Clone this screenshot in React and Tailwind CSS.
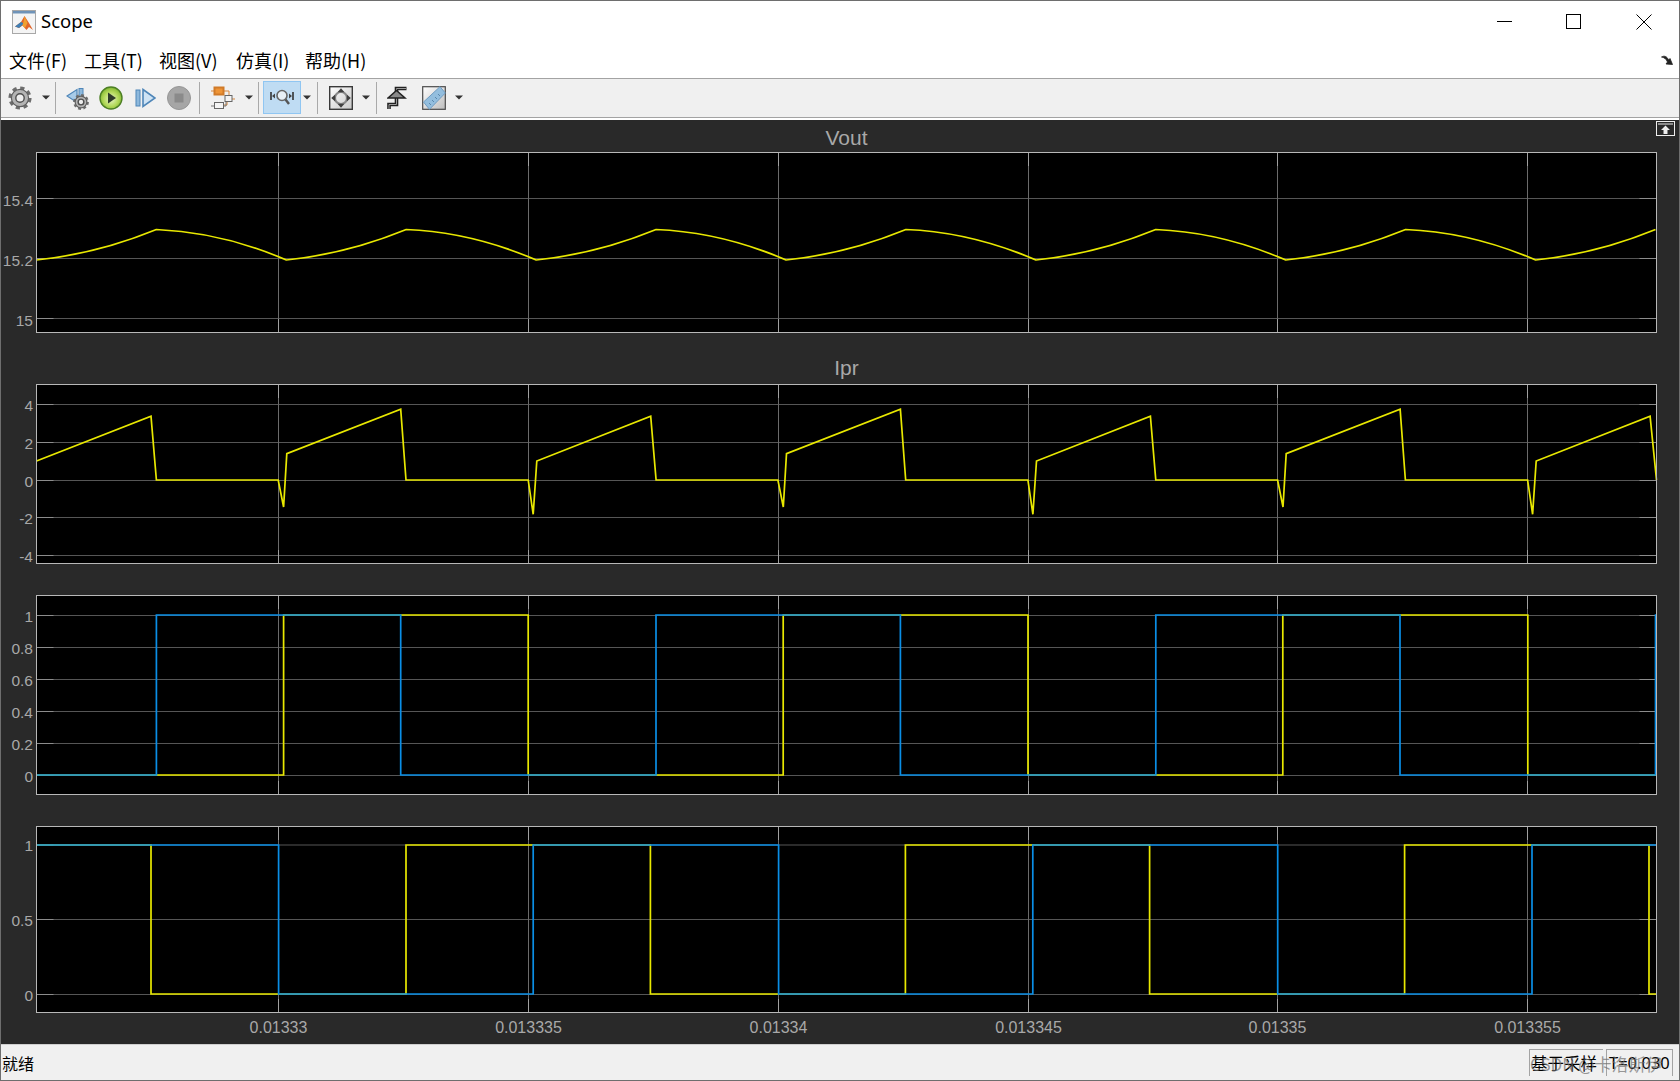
import React from 'react'

const YELLOW = '#e8e800'
const BLUE = '#0a8ee6'
const LEFT = 36.5
const RIGHT = 1656.5
const GRID_X = [278.5, 528.5, 778.5, 1028.5, 1277.5, 1527.5]
const X_LABELS = ['0.01333', '0.013335', '0.01334', '0.013345', '0.01335', '0.013355']

// Vout: sawtooth-like curve, one period is 249.85px
function voutPath() {
	let d = `M${LEFT} 260`
	for (let k = 0; k < 7; k++) {
		const trough = LEFT + k * 249.85
		const peak = 156.4 + k * 249.85
		const next = trough + 249.85
		d += ` Q${(trough + peak) / 2} 254 ${peak} 229.5`
		if (k < 6) d += ` Q${(peak + next) / 2} 232 ${next} 260`
	}
	return d
}

function iprPoints() {
	const pts = [[36.5, 461], [151, 416.3], [156.4, 480], [278.2, 480], [283.6, 507], [286.8, 453.7], [400.7, 409.3], [406, 480], [528.2, 480], [533.2, 514.3], [536.8, 461]]
	const all = []
	for (let k = 0; k < 4; k++) {
		for (const [x, y] of pts) {
			if (k > 0 && x === 36.5) continue
			all.push([x + k * 499.7, y])
		}
	}
	return all
		.filter(([x]) => x <= 1650.5)
		.concat([[1656.5, 480]])
		.map((p) => p.join(','))
		.join(' ')
}

// square wave from a list of edge positions
function square(edges, startHigh, high, low) {
	let on = startHigh
	let pts = [[LEFT, on ? high : low]]
	for (const x of edges) {
		pts.push([x, on ? high : low])
		on = !on
		pts.push([x, on ? high : low])
	}
	pts.push([RIGHT, on ? high : low])
	return pts.map((p) => p.join(',')).join(' ')
}

function Axes({ top, bottom, extra = 0, ticks, dy, children, showX }) {
	const h = bottom - top + extra
	return (
		<svg width="1678" height={h} viewBox={`1 ${top} 1678 ${h}`} className="block shrink-0 overflow-visible">
			<rect x={LEFT} y={top + 0.5} width={RIGHT - LEFT} height={bottom - top - 1} fill="#000" />
			{ticks.map(([label, y]) => (
				<g key={label}>
					<line x1={LEFT} x2={RIGHT} y1={y} y2={y} stroke="#565656" />
					<line x1={LEFT} x2={LEFT + 17} y1={y} y2={y} stroke="#8c8c8c" />
					<line x1={RIGHT - 17} x2={RIGHT} y1={y} y2={y} stroke="#8c8c8c" />
					<text x="33" y={y + dy} textAnchor="end" className="fill-[#a8a8a8] text-[15.5px] font-['Liberation_Sans',sans-serif]">{label}</text>
				</g>
			))}
			{GRID_X.map((x) => (
				<g key={x}>
					<line x1={x} x2={x} y1={top} y2={bottom} stroke="#6b6b6b" />
					<line x1={x} x2={x} y1={top} y2={top + 14} stroke="#a0a0a0" />
					<line x1={x} x2={x} y1={bottom - 14} y2={bottom} stroke="#a0a0a0" />
				</g>
			))}
			{children}
			<rect x={LEFT} y={top + 0.5} width={RIGHT - LEFT} height={bottom - top - 1} fill="none" stroke="#b8b8b8" />
			{showX && X_LABELS.map((label, i) => (
				<text key={label} x={GRID_X[i]} y={bottom + 20} textAnchor="middle" className="fill-[#a8a8a8] text-[16px] font-['Liberation_Sans',sans-serif]">{label}</text>
			))}
		</svg>
	)
}

function Arrow() {
	return (
		<svg width="8" height="5" viewBox="0 0 8 5" className="shrink-0">
			<path d="M0 0.5H8L4 4.5Z" fill="#333" />
		</svg>
	)
}

function Sep({ className }) {
	return <div className={`w-px h-[32px] bg-[#a9a9a9] shrink-0 ${className}`}></div>
}

function GearShape({ cx, cy, r }) {
	return (
		<g>
			<circle cx={cx} cy={cy} r={r} fill="none" stroke="#6d6d6d" strokeWidth={r * 0.32} strokeDasharray={`${r * 0.42} ${r * 0.364}`} />
			<circle cx={cx} cy={cy} r={r * 0.86} fill="#b4b4b4" stroke="#5f5f5f" strokeWidth="1.2" />
			<circle cx={cx} cy={cy} r={r * 0.42} fill="#eeeeee" stroke="#4f4f4f" strokeWidth="1.4" />
		</g>
	)
}

function MatlabIcon() {
	return (
		<svg width="24" height="24" viewBox="0 0 24 24" className="shrink-0">
			<rect x="0.5" y="0.5" width="23" height="23" fill="#f4f4f4" stroke="#a8a8a8" />
			<rect x="1" y="1" width="22" height="2.5" fill="#6f93b8" />
			<path d="M3 16.5L9 12L12.5 6L17 13L21 20L17 17L14.5 20L10.5 15.5L7 18Z" fill="#e2652a" />
			<path d="M3 16.5L9 12L12 13.5L7 18Z" fill="#3f7fb5" />
			<path d="M12.5 6L15.5 13L13 18L10.5 15.5L12 10Z" fill="#f0a030" />
		</svg>
	)
}

function BackGear() {
	return (
		<svg width="24" height="24" viewBox="0 0 24 24" className="shrink-0">
			<path d="M1 10L11 3.5V16.5Z" fill="#a8cbe8" stroke="#4f86b8" strokeWidth="1.2" />
			<rect x="13" y="2.5" width="4" height="13" fill="#8db8dc" stroke="#4f86b8" />
			<GearShape cx={15} cy={16} r={6.8} />
		</svg>
	)
}

function Play() {
	return (
		<svg width="24" height="24" viewBox="0 0 24 24" className="shrink-0">
			<defs>
				<radialGradient id="playFill" cx="50%" cy="55%" r="55%">
					<stop offset="0%" stopColor="#e9f5c9" />
					<stop offset="60%" stopColor="#b3d95a" />
					<stop offset="100%" stopColor="#7fb52e" />
				</radialGradient>
			</defs>
			<circle cx="12" cy="12" r="11" fill="url(#playFill)" stroke="#4c7f24" strokeWidth="1.4" />
			<path d="M9 6.5L17 12L9 17.5Z" fill="#2f3b2a" />
		</svg>
	)
}

function StepForward() {
	return (
		<svg width="21" height="24" viewBox="0 0 21 24" className="shrink-0">
			<rect x="1" y="4" width="4" height="16" fill="#8db8dc" stroke="#4f86b8" />
			<path d="M8 3.5L20 12L8 20.5Z" fill="#cfe3f4" stroke="#4f86b8" strokeWidth="1.6" />
		</svg>
	)
}

function Stop() {
	return (
		<svg width="24" height="24" viewBox="0 0 24 24" className="shrink-0">
			<circle cx="12" cy="12" r="11.5" fill="#a6a6a6" stroke="#969696" />
			<rect x="7.5" y="7.5" width="9" height="9" fill="#8a8a8a" />
		</svg>
	)
}

function Blocks() {
	return (
		<svg width="24" height="24" viewBox="0 0 24 24" className="shrink-0">
			<path d="M0 5H3M13 5H18V9M16 13H24M16 13V19H11" fill="none" stroke="#d8873c" strokeWidth="1" />
			<rect x="3.5" y="1.5" width="9" height="7" fill="#ee9436" stroke="#d07a28" strokeWidth="2" />
			<path d="M0 20H3M13 20H15V14" fill="none" stroke="#777" />
			<rect x="14" y="9.5" width="7" height="6" fill="#f4f4f4" stroke="#666" />
			<rect x="3.5" y="16.5" width="9" height="6" fill="#f4f4f4" stroke="#666" />
		</svg>
	)
}

function ZoomX() {
	return (
		<svg width="24" height="20" viewBox="0 0 24 20" className="shrink-0">
			<path d="M1 4V12M23 4V12" stroke="#333" strokeWidth="1.6" />
			<path d="M2 8L5 5.5V10.5ZM22 8L19 5.5V10.5Z" fill="#444" />
			<circle cx="12" cy="7.5" r="5" fill="#e8f0f6" stroke="#666" strokeWidth="1.6" />
			<path d="M15.5 11.5L19 16" stroke="#555" strokeWidth="2.4" />
		</svg>
	)
}

function FitIcon() {
	return (
		<svg width="24" height="24" viewBox="0 0 24 24" className="shrink-0">
			<defs>
				<linearGradient id="fitFill" x1="0" y1="0" x2="1" y2="1">
					<stop offset="0%" stopColor="#ffffff" />
					<stop offset="100%" stopColor="#c8c8c8" />
				</linearGradient>
			</defs>
			<rect x="0.7" y="0.7" width="22.6" height="22.6" fill="url(#fitFill)" stroke="#3a3a3a" strokeWidth="1.4" />
			<circle cx="12" cy="12" r="6" fill="none" stroke="#8a8a8a" strokeWidth="2.2" />
			<path d="M12 2.2L15.5 6.2H8.5ZM12 21.8L15.5 17.8H8.5ZM2.2 12L6.2 8.5V15.5ZM21.8 12L17.8 8.5V15.5Z" fill="#3f3f3f" />
		</svg>
	)
}

function LoadIcon() {
	return (
		<svg width="20" height="23" viewBox="0 0 20 23" className="shrink-0">
			<path d="M19.5 2.5H9.5V7" fill="none" stroke="#222" strokeWidth="3.6" />
			<path d="M19 2.5H9.5V7" fill="none" stroke="#9a9a9a" strokeWidth="1" />
			<path d="M9.5 11V18.5H2V23" fill="none" stroke="#222" strokeWidth="3.6" />
			<path d="M9.5 11V18.5H2V23" fill="none" stroke="#9a9a9a" strokeWidth="1" />
			<path d="M1 12L9.5 4.5L18 12Z" fill="#8a8a8a" stroke="#222" strokeWidth="1.6" />
		</svg>
	)
}

function RulerIcon() {
	return (
		<svg width="24" height="24" viewBox="0 0 24 24" className="shrink-0">
			<defs>
				<linearGradient id="rulerFill" x1="0" y1="0" x2="1" y2="1">
					<stop offset="0%" stopColor="#ffffff" />
					<stop offset="100%" stopColor="#bdbdbd" />
				</linearGradient>
			</defs>
			<rect x="0.7" y="0.7" width="22.6" height="22.6" fill="url(#rulerFill)" stroke="#4a4a4a" strokeWidth="1.2" />
			<path d="M1.5 16L18 0.7L23.3 7L7.5 23.3Z" fill="#93bede" stroke="#6f9cc2" />
			<path d="M7 17L9 19M10 14L12 16M13 11L15 13M16 8L18 10" stroke="#5a88ad" />
		</svg>
	)
}

function App() {
	return (
		<div className="w-[1680px] h-[1081px] flex flex-col overflow-hidden bg-white border border-[#6e6e6e] font-['Noto_Sans','Noto_Sans_CJK_SC',sans-serif] text-black">
			{/* title bar */}
			<div className="flex items-center h-[41px] shrink-0 pl-[11px]">
				<MatlabIcon />
				<span className="ml-[5px] text-[18.5px] leading-none">Scope</span>
				<div className="ml-auto flex items-center">
					<div className="w-[15px] h-px bg-black"></div>
					<div className="ml-[54px] w-[15px] h-[15px] border border-black"></div>
					<svg width="16" height="16" viewBox="0 0 16 16" className="ml-[55px] mr-[27px]">
						<path d="M0.5 0.5L15.5 15.5M15.5 0.5L0.5 15.5" stroke="#000" />
					</svg>
				</div>
			</div>

			{/* menu bar */}
			<div className="flex items-center h-[37px] shrink-0 pl-[8px] pr-[6px] text-[18px] border-b border-[#a3a3a3] font-['Noto_Sans_CJK_SC',sans-serif]">
				<span className="w-[75px]">文件(F)</span>
				<span className="w-[75px]">工具(T)</span>
				<span className="w-[77px]">视图(V)</span>
				<span className="w-[69px]">仿真(I)</span>
				<span>帮助(H)</span>
				<svg width="12" height="10" viewBox="0 0 12 10" className="ml-auto">
					<path d="M0.5 2C3 0.5 6 1 7.5 5L9 3.5L11.5 9.5L5 9L6.5 7C5 3.5 3 2.5 0.5 2Z" fill="#222" stroke="#222" strokeWidth="0.8" />
				</svg>
			</div>

			{/* toolbar */}
			<div className="flex items-center h-[39px] shrink-0 pl-[7px] pb-[1px] bg-[#f0f0f0] border-b border-[#a3a3a3]">
				<svg width="24" height="24" viewBox="0 0 24 24" className="shrink-0"><GearShape cx={12} cy={12} r={10} /></svg>
				<div className="ml-[10px]"><Arrow /></div>
				<Sep className="ml-[5px]" />
				<div className="ml-[10px]"><BackGear /></div>
				<div className="ml-[9px]"><Play /></div>
				<div className="ml-[12px]"><StepForward /></div>
				<div className="ml-[11px]"><Stop /></div>
				<Sep className="ml-[8px]" />
				<div className="ml-[11px]"><Blocks /></div>
				<div className="ml-[10px]"><Arrow /></div>
				<Sep className="ml-[5px]" />
				<div className="ml-[4px] w-[38px] h-[33px] flex items-center justify-center bg-[#bfdcf3] border border-[#90c6f2]"><ZoomX /></div>
				<div className="ml-[2px]"><Arrow /></div>
				<Sep className="ml-[6px]" />
				<div className="ml-[11px]"><FitIcon /></div>
				<div className="ml-[9px]"><Arrow /></div>
				<Sep className="ml-[6px]" />
				<div className="ml-[10px]"><LoadIcon /></div>
				<div className="ml-[15px]"><RulerIcon /></div>
				<div className="ml-[9px]"><Arrow /></div>
			</div>

			{/* scope panel */}
			<div className="relative flex-1 flex flex-col mt-[2px] bg-[#292929] border-b border-[#cfcfcf] font-['Liberation_Sans',sans-serif]">
				<div className="absolute top-[1px] right-[4px] w-[19px] h-[15px] border border-[#eeeeee] flex items-center justify-center">
					<svg width="15" height="11" viewBox="0 0 15 11">
						<path d="M0 1H15" stroke="#eee" />
						<path d="M7.5 2.5L12 7H9.5V11H5.5V7H3Z" fill="#eee" />
					</svg>
				</div>

				<div className="h-[32px] flex items-center justify-center pt-[4px] pl-[13px] text-[21px] text-[#a8a8a8] shrink-0">Vout</div>
				<Axes top={152} bottom={333} dy={7.5} ticks={[['15.4', 198.5], ['15.2', 258.5], ['15', 318.5]]}>
					<path d={voutPath()} fill="none" stroke={YELLOW} strokeWidth="1.7" />
				</Axes>

				<div className="h-[51px] flex items-center justify-center pt-[18px] pl-[13px] text-[21px] text-[#a8a8a8] shrink-0">Ipr</div>
				<Axes top={384} bottom={564} dy={6} ticks={[['4', 404.5], ['2', 442.5], ['0', 480.5], ['-2', 517.5], ['-4', 555.5]]}>
					<polyline points={iprPoints()} fill="none" stroke={YELLOW} strokeWidth="1.7" />
				</Axes>

				<div className="h-[31px] shrink-0"></div>
				<Axes top={595} bottom={795} dy={6.5} ticks={[['1', 615.5], ['0.8', 647.5], ['0.6', 679.5], ['0.4', 711.5], ['0.2', 743.5], ['0', 775.5]]}>
					<polyline points={square([283.6, 528.2, 783.2, 1028, 1282.8, 1527.8], false, 615, 775)} fill="none" stroke={YELLOW} strokeWidth="1.7" />
					<polyline points={square([156.4, 400.7, 656, 900.4, 1155.8, 1400, 1655.5], false, 615, 775)} fill="none" stroke={BLUE} strokeWidth="1.7" />
				</Axes>

				<div className="h-[31px] shrink-0"></div>
				<Axes top={826} bottom={1013} extra={31} showX dy={6} ticks={[['1', 845], ['0.5', 919.5], ['0', 994.5]]}>
					<polyline points={square([151, 406, 650.4, 905.4, 1149.6, 1404.6, 1649], true, 845, 994)} fill="none" stroke={YELLOW} strokeWidth="1.7" />
					<polyline points={square([278.6, 533.2, 778.6, 1032.8, 1277.7, 1532], true, 845, 994)} fill="none" stroke={BLUE} strokeWidth="1.7" />
				</Axes>
			</div>

			{/* status bar */}
			<div className="relative flex items-center h-[35px] shrink-0 bg-[#f0f0f0] pl-[1px] pr-[6px] text-[16px] font-['Noto_Sans_CJK_SC',sans-serif]">
				<span>就绪</span>
				<div className="ml-auto flex items-stretch h-[27px] gap-[3px] text-[16.5px]">
					<div className="w-[74px] flex items-center pl-[1px] border-l border-t border-[#a3a3a3]">基于采样</div>
					<div className="w-[67px] flex items-center pl-[2px] border-l border-t border-r border-[#a3a3a3] font-['Noto_Sans',sans-serif]">T=0.030</div>
				</div>
				<span className="absolute left-[1529px] top-[6px] text-[17px] text-[#6e6e6e]/70 whitespace-nowrap">CSDN @卡洛斯伊</span>
			</div>
		</div>
	)
}

export default App
